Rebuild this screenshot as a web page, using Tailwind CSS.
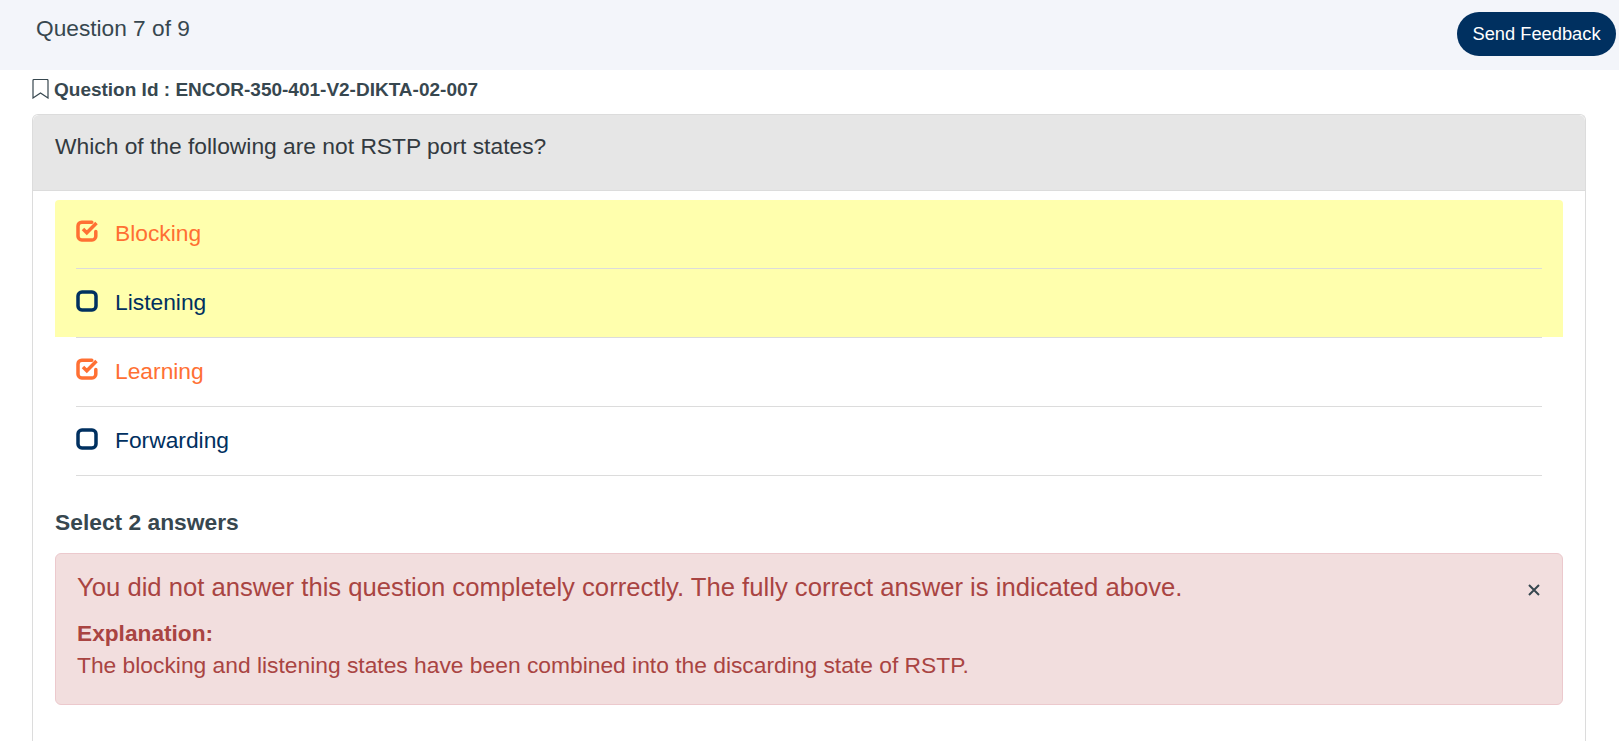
<!DOCTYPE html>
<html>
<head>
<meta charset="utf-8">
<script src="https://cdn.jsdelivr.net/npm/@tailwindcss/browser@4"></script>
</head>
<body class="bg-white h-[741px] overflow-hidden font-['Liberation_Sans',Arial,sans-serif] text-[#37474f]">
<header class="h-[70px] bg-[#f3f5fa] flex justify-between items-start pl-9 pr-[3px]">
  <div class="text-[22.7px] leading-[28px] mt-[14px] text-[#37474f]">Question 7 of 9</div>
  <button class="mt-3 w-[159px] h-11 rounded-[22px] bg-[#003060] text-white text-[18.3px]">Send Feedback</button>
</header>
<div class="pl-8 pr-[33px]">
  <div class="h-11 flex items-start pt-[10px]">
    <svg class="w-[17px] h-[20px] mt-[-1px] shrink-0" viewBox="0 0 17 20" fill="none" stroke="#37474f" stroke-width="1.2"><path d="M1 1.500a1 1 0 0 1 1-1h13a1 1 0 0 1 1 1v17.500l-7.500-5-7.500 5z"/></svg>
    <span class="ml-[5px] font-bold text-[19px] leading-[20px]">Question Id : ENCOR-350-401-V2-DIKTA-02-007</span>
  </div>
  <section class="border border-b-0 border-[#dcdcdc] rounded-t-[6px] h-[627px]">
    <div class="h-[76px] bg-[#e6e6e6] border-b border-[#dcdcdc] rounded-t-[6px] pl-[22px] pt-[16px] text-[22.8px] leading-[30px] text-[#333a40]">Which of the following are not RSTP port states?</div>
    <div class="px-[22px] pt-[9px]">
      <div class="relative">
        <div class="absolute left-0 right-0 top-0 h-[137px] bg-[#ffffad] rounded-t-[4px]"></div>
        <ul class="relative mx-[21px]">
          <li class="h-[69px] border-b border-[#dcdcdc] flex items-center text-[22.8px] text-[#ff7033] pb-[1px]">
            <svg class="w-[22px] h-[22px] mr-[17px] mt-[-5px] shrink-0" viewBox="0 0 22 22" fill="none"><path d="M19.800 11.500v4.700a3.800 3.800 0 0 1-3.800 3.800H5.800A3.800 3.800 0 0 1 2 16.200V6A3.800 3.800 0 0 1 5.800 2.200h10" stroke="#ff7033" stroke-width="3.500" stroke-linecap="round"/><path d="M7 9l3.800 3.800L20.500 3" stroke="#ff7033" stroke-width="3.500"/></svg>
            <span>Blocking</span>
          </li>
          <li class="h-[69px] border-b border-[#dcdcdc] flex items-center text-[22.8px] text-[#003060] pb-[1px]">
            <svg class="w-[22px] h-[22px] mr-[17px] mt-[-4px] shrink-0" viewBox="0 0 22 22" fill="none"><rect x="2" y="2" width="18" height="18" rx="4" stroke="#003060" stroke-width="3.500"/></svg>
            <span>Listening</span>
          </li>
          <li class="h-[69px] border-b border-[#dcdcdc] flex items-center text-[22.8px] text-[#ff7033] pb-[1px]">
            <svg class="w-[22px] h-[22px] mr-[17px] mt-[-5px] shrink-0" viewBox="0 0 22 22" fill="none"><path d="M19.800 11.500v4.700a3.800 3.800 0 0 1-3.800 3.800H5.800A3.800 3.800 0 0 1 2 16.200V6A3.800 3.800 0 0 1 5.800 2.200h10" stroke="#ff7033" stroke-width="3.500" stroke-linecap="round"/><path d="M7 9l3.800 3.800L20.500 3" stroke="#ff7033" stroke-width="3.500"/></svg>
            <span>Learning</span>
          </li>
          <li class="h-[69px] border-b border-[#dcdcdc] flex items-center text-[22.8px] text-[#003060] pb-[1px]">
            <svg class="w-[22px] h-[22px] mr-[17px] mt-[-4px] shrink-0" viewBox="0 0 22 22" fill="none"><rect x="2" y="2" width="18" height="18" rx="4" stroke="#003060" stroke-width="3.500"/></svg>
            <span>Forwarding</span>
          </li>
        </ul>
      </div>
      <div class="mt-[33px] font-bold text-[22.8px] leading-[26px] text-[#37474f]">Select 2 answers</div>
      <div class="relative mt-[18px] h-[152px] border border-[#ecc9cd] rounded-[6px] bg-[#f2dede] text-[#a94442] pl-[21px] pt-[17px]">
        <div class="text-[25.65px] leading-[32px]">You did not answer this question completely correctly. The fully correct answer is indicated above.</div>
        <div class="mt-[17px] font-bold text-[22.7px] leading-[26px]">Explanation:</div>
        <div class="mt-[5px] text-[22.8px] leading-[28px]">The blocking and listening states have been combined into the discarding state of RSTP.</div>
        <svg class="absolute right-[22px] top-[30px] w-[12px] h-[12px]" viewBox="0 0 12 12" stroke="#37474f" stroke-width="2"><path d="M1 1l10 10M11 1L1 11"/></svg>
      </div>
    </div>
  </section>
</div>
</body>
</html>
